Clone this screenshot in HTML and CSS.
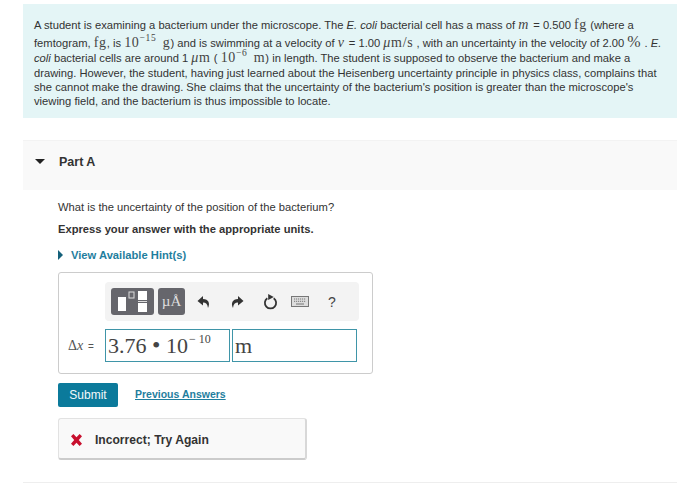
FILE: index.html
```html
<!DOCTYPE html>
<html>
<head>
  <meta charset="utf-8">
  <title>Part A</title>
  <link rel="stylesheet" href="styles.css">
</head>
<body>

  <div class="page">

    <section class="intro">
      <p class="line">A student is examining a bacterium under the microscope. The <i>E. coli</i> bacterial cell has a mass of <span class="math"><i>m</i> </span>= 0.500 <span class="math">fg</span> (where a</p>
      <p class="line">femtogram, <span class="math">fg</span>, is <span class="math">10<sup>&minus;15</sup> g</span>) and is swimming at a velocity of <span class="math"><i>v</i> </span>= 1.00 <span class="math"><i>&mu;</i>m/s</span> , with an uncertainty in the velocity of 2.00 <span class="math percent">%</span> . <i>E.</i></p>
      <p class="line"><i>coli</i> bacterial cells are around 1 <span class="math"><i>&mu;</i>m</span> ( <span class="math">10<sup>&minus;6</sup> m</span>) in length. The student is supposed to observe the bacterium and make a</p>
      <p class="line">drawing. However, the student, having just learned about the Heisenberg uncertainty principle in physics class, complains that</p>
      <p class="line">she cannot make the drawing. She claims that the uncertainty of the bacterium's position is greater than the microscope's</p>
      <p class="line">viewing field, and the bacterium is thus impossible to locate.</p>
    </section>

    <header class="part-head">
      <span class="arrow-down"></span>
      <h2>Part A</h2>
    </header>

    <section class="part-body">
      <p class="question">What is the uncertainty of the position of the bacterium?</p>
      <p class="units">Express your answer with the appropriate units.</p>
      <p class="hints"><span class="arrow-right"></span><a href="#">View Available Hint(s)</a></p>

      <div class="answer-box">
        <div class="toolbar">
          <button class="tool tool-wide" type="button">
            <svg width="30" height="21" viewBox="0 0 30 21">
              <rect x="0" y="6" width="8" height="14" fill="#fff"/>
              <rect x="11" y="1" width="5" height="6" fill="none" stroke="#ddd" stroke-width="1"/>
              <rect x="20" y="0" width="9" height="9" fill="#fff"/>
              <rect x="20" y="10" width="9" height="1" fill="#ddd"/>
              <rect x="20" y="12" width="9" height="9" fill="#fff"/>
            </svg>
          </button>
          <button class="tool tool-units" type="button">&micro;&Aring;</button>
          <span class="tool-icons">
            <svg width="14" height="14" viewBox="0 0 14 14"><path d="M6 1 L0.5 6 L6 10.5 L6 7.6 C9 7.6 10.6 9.4 11 13 C13.4 8.4 11.6 4.2 6 4 Z" fill="#333"/></svg>
            <svg width="14" height="14" viewBox="0 0 14 14"><path d="M8 1 L13.5 6 L8 10.5 L8 7.6 C5 7.6 3.4 9.4 3 13 C0.6 8.4 2.4 4.2 8 4 Z" fill="#333"/></svg>
            <svg width="15" height="17" viewBox="0 0 16 17"><path d="M4.6 5 A6 6 0 1 0 11.4 5" fill="none" stroke="#333" stroke-width="1.9"/><path d="M5.5 0.5 L11.5 3.8 L5.5 6.8 Z" fill="#333"/></svg>
            <svg class="tool-keys" width="18" height="11" viewBox="0 0 18 11">
              <rect x="0.5" y="0.5" width="17" height="10" fill="#ddd" stroke="#777"/>
              <path d="M3 3 H15 M3 5.3 H15" stroke="#777" stroke-width="1" stroke-dasharray="1.2 .8"/>
              <path d="M5 8 H13" stroke="#777" stroke-width="1"/>
            </svg>
            <span class="tool-help">?</span>
          </span>
        </div>
        <div class="answer-row">
          <span class="answer-label"><span class="delta">&Delta;<i>x</i></span> =</span>
          <div class="field">3.76 <span class="dot">&bull;</span> 10<sup>&minus; 10</sup></div>
          <div class="field">m</div>
        </div>
      </div>

      <div class="actions">
        <button class="submit" type="button">Submit</button>
        <a class="previous" href="#">Previous Answers</a>
      </div>

      <div class="feedback">
        <svg width="13" height="12" viewBox="0 0 13 12"><path d="M1 2.2 L3.4 0 L6.5 3.2 L9.6 0 L12 2.2 L8.8 6 L12 9.8 L9.6 12 L6.5 8.8 L3.4 12 L1 9.8 L4.2 6 Z" fill="#c8102e"/></svg>
        <span>Incorrect; Try Again</span>
      </div>
    </section>

    <hr class="rule">

  </div>

</body>
</html>
```

FILE: styles.css
```css
body {
    margin: 0;
    background: #fff;
    color: #333;
    font-family: "Liberation Sans", Arial, sans-serif;
    font-size: 11.2px;
}

p {
    margin: 0;
}

.page {
    padding: 4px 23px 0;
}

.intro {
    height: 114px;
    box-sizing: border-box;
    padding: 12px 11px 0;
    background: #e4f5f6;
}

.line {
    height: 14px;
    line-height: 14px;
    white-space: nowrap;
}

.line:nth-child(1),
.line:nth-child(2) {
    height: 17px;
    line-height: 17px;
}

.line:nth-child(3) {
    height: 16px;
    line-height: 16px;
}

.math {
    font-family: "Liberation Serif", serif;
    font-size: 14px;
    letter-spacing: 0.05em;
    color: #444;
}

.math sup {
    font-size: 9.5px;
    line-height: 0;
    margin-right: 2px;
}

.percent {
    font-size: 16px;
}

.part-head {
    display: flex;
    align-items: center;
    height: 50px;
    margin-top: 22px;
    padding: 0 0 8px 12px;
    background: #f9f9f9;
    border-top: 1px solid #f3f3f3;
    box-sizing: border-box;
}

.part-head h2 {
    margin: 0 0 0 14px;
    font-size: 12.5px;
    font-weight: bold;
    color: #333;
}

.arrow-down {
    width: 0;
    height: 0;
    border-left: 5px solid transparent;
    border-right: 5px solid transparent;
    border-top: 5px solid #222;
}

.arrow-right {
    display: inline-block;
    width: 0;
    height: 0;
    margin-right: 8px;
    border-top: 5px solid transparent;
    border-bottom: 5px solid transparent;
    border-left: 5px solid #14607a;
}

.part-body {
    padding: 9px 0 0 35px;
}

.question {
    height: 16px;
    line-height: 16px;
}

.units {
    height: 16px;
    margin-top: 6px;
    line-height: 16px;
    font-weight: bold;
}

.hints {
    display: flex;
    align-items: center;
    height: 16px;
    margin-top: 10px;
    font-weight: bold;
}

.hints a,
.previous {
    color: #1f7e9e;
    font-weight: bold;
}

.hints a {
    text-decoration: none;
}

.answer-box {
    box-sizing: border-box;
    width: 315px;
    height: 102px;
    margin-top: 9px;
    padding: 9px 0 0 46px;
    border: 1px solid #ccc;
    border-radius: 3px;
}

.toolbar {
    display: flex;
    align-items: center;
    box-sizing: border-box;
    width: 254px;
    height: 39px;
    padding-left: 6px;
    background: #f3f3f3;
    border-radius: 4px;
}

.tool {
    display: flex;
    align-items: center;
    justify-content: center;
    height: 27px;
    padding: 0;
    border: 0;
    border-radius: 3px;
    background: #66666c;
    color: #fff;
}

.tool-wide {
    width: 43px;
}

.tool-units {
    width: 27px;
    margin-left: 4px;
    font-family: "Liberation Serif", serif;
    font-size: 15px;
    color: #ddd;
}

.tool-icons {
    display: flex;
    align-items: center;
    gap: 19px;
    margin-left: 12px;
}

.tool-keys {
    margin-left: -6px;
}

.tool-help {
    font-size: 14px;
    color: #444;
}

.answer-row {
    display: flex;
    align-items: center;
    margin-top: 8px;
    margin-left: -37px;
}

.answer-label {
    width: 37px;
    font-size: 10px;
    color: #555;
    white-space: nowrap;
    word-spacing: 2px;
}

.delta {
    font-family: "Liberation Serif", serif;
    font-size: 14px;
}

.field {
    box-sizing: border-box;
    width: 125px;
    height: 33px;
    margin-right: 2px;
    padding-left: 2px;
    border: 1px solid #3f95a8;
    font-family: "Liberation Serif", serif;
    font-size: 22px;
    line-height: 31px;
    white-space: nowrap;
    color: #444;
}

.field sup {
    font-size: 12px;
    line-height: 0;
    margin-left: 1px;
    vertical-align: 10px;
}

.dot {
    font-size: 24px;
    line-height: 0;
}

.actions {
    display: flex;
    align-items: center;
    margin-top: 9px;
}

.submit {
    width: 60px;
    height: 24px;
    padding: 0;
    border: 0;
    border-radius: 2px;
    background: #0b7a9b;
    color: #f2f8fa;
    font-family: "Liberation Sans", Arial, sans-serif;
    font-size: 12px;
}

.previous {
    margin-left: 17px;
    margin-bottom: 2px;
    font-size: 10.5px;
}

.feedback {
    display: flex;
    align-items: center;
    box-sizing: border-box;
    width: 249px;
    height: 42px;
    margin-top: 11px;
    padding: 3px 0 0 11px;
    background: #f9f9f9;
    border: 1px solid #e2e2e2;
    border-bottom: 2px solid #ccc;
    border-right: 2px solid #d8d8d8;
    border-radius: 3px;
    font-size: 12.1px;
    font-weight: bold;
}

.feedback span {
    margin-left: 12px;
}

.rule {
    height: 1px;
    margin: 22px 0 0;
    border: 0;
    background: #eee;
}
```
